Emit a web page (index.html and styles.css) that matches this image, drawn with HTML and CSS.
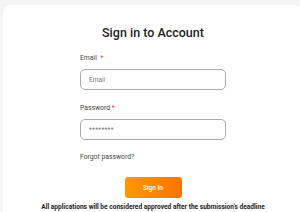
FILE: index.html
```html
<!DOCTYPE html>
<html>
<head>
<meta charset="utf-8">
<link rel="stylesheet" href="styles.css">
</head>
<body>
<div class="card">
  <h1 class="title">Sign in to Account</h1>
  <form class="form">
    <label class="label">Email <span class="req req-email">*</span></label>
    <div class="input"><span class="ph">Email</span></div>
    <label class="label label-pw">Password <span class="req">*</span></label>
    <div class="input input-pw"><span class="dots">********</span></div>
    <div class="forgot">Forgot password?</div>
    <div class="actions"><button type="button" class="btn">Sign In</button></div>
  </form>
  <p class="note">All applications will be considered approved after the submission's deadline</p>
</div>
</body>
</html>
```
FILE: styles.css
```css
html, body {
  margin: 0;
  padding: 0;
  background: #f4f4f4;
  overflow: hidden;
  height: 212px;
  font-family: Roboto, "Liberation Sans", sans-serif;
}
.card {
  margin: 5px 0 0 3px;
  width: 300px;
  height: 230px;
  background: #fff;
  border-radius: 8px;
  padding-top: 20px;
  box-sizing: border-box;
}
.title {
  margin: 0;
  text-align: center;
  font-size: 12.5px;
  line-height: 16px;
  font-weight: 500;
  color: #222;
}
.form {
  width: 146px;
  margin: 13px auto 0 77px;
  display: flex;
  flex-direction: column;
}
.label {
  font-size: 6.8px;
  line-height: 8px;
  color: #444;
}
.label-pw { margin-top: 14px; }
.req { color: #e53935; }
.req-email { margin-left: 2px; }
.input {
  margin-top: 7px;
  height: 21px;
  border: 1px solid #aaa;
  border-radius: 5px;
  box-sizing: border-box;
  display: flex;
  align-items: center;
  padding-left: 8px;
  font-size: 6.5px;
  color: #777;
}
.input-pw { margin-top: 7px; }
.dots { letter-spacing: 0.3px; }
.forgot {
  margin-top: 13px;
  font-size: 6.8px;
  line-height: 8px;
  color: #444;
}
.actions {
  display: flex;
  justify-content: center;
  margin-top: 16px;
}
.btn {
  width: 57px;
  height: 21px;
  border: none;
  border-radius: 3px;
  background: linear-gradient(90deg, #ff9800, #ff7300);
  color: #fff;
  font-family: inherit;
  font-size: 6.5px;
  font-weight: 500;
  padding: 0;
}
.note {
  margin: 5px 0 0;
  text-align: center;
  font-size: 6.6px;
  line-height: 8px;
  font-weight: 700;
  color: #222;
}
```
